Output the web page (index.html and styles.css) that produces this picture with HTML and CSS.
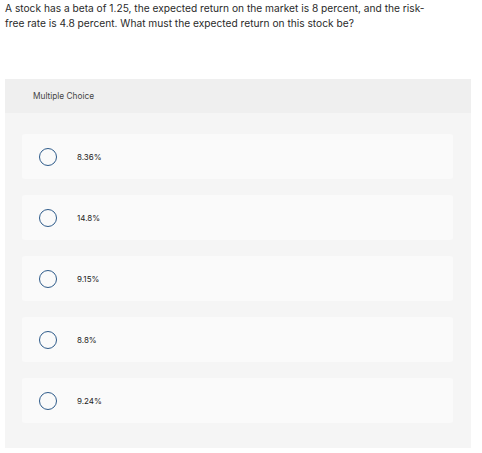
FILE: index.html
```html
<!DOCTYPE html>
<html>
<head>
<meta charset="utf-8">
<link rel="stylesheet" href="styles.css">
</head>
<body>
<p class="question">A stock has a beta of 1.25, the expected return on the market is 8 percent, and the risk-free rate is 4.8 percent. What must the expected return on this stock be?</p>
<div class="mc">
  <div class="mc-head">Multiple Choice</div>
  <div class="mc-body">
    <label class="opt"><span class="radio"></span><span class="opt-text">8.36%</span></label>
    <label class="opt"><span class="radio"></span><span class="opt-text">14.8%</span></label>
    <label class="opt"><span class="radio"></span><span class="opt-text">9.15%</span></label>
    <label class="opt"><span class="radio"></span><span class="opt-text">8.8%</span></label>
    <label class="opt"><span class="radio"></span><span class="opt-text">9.24%</span></label>
  </div>
</div>
</body>
</html>
```
FILE: styles.css
```css
html, body { margin: 0; padding: 0; background: #fff; }
body {
  font-family: Inter, "Liberation Sans", Arial, sans-serif;
  color: #333;
  padding: 1px 11px 0 5px;
}
.question {
  margin: 0;
  width: 422px;
  font-size: 10.2px;
  line-height: 15px;
  color: #2a2a2a;
}
.mc {
  margin-top: 48px;
  width: 466px;
  background: #f5f5f5;
}
.mc-head {
  height: 34px;
  background: #efefef;
  display: flex;
  align-items: center;
  padding-left: 28px;
  font-size: 8.3px;
  color: #444;
}
.mc-body {
  display: flex;
  flex-direction: column;
  gap: 16px;
  padding: 21px 18px 25px 17px;
}
.opt {
  height: 45px;
  background: #fafafa;
  border-radius: 3px;
  display: flex;
  align-items: center;
  padding-left: 17px;
}
.radio {
  width: 16px;
  height: 16px;
  border: 1.3px solid #2e5b8a;
  border-radius: 50%;
  flex: none;
}
.opt-text {
  margin-left: 20px;
  font-size: 8px;
  color: #222;
}
```
